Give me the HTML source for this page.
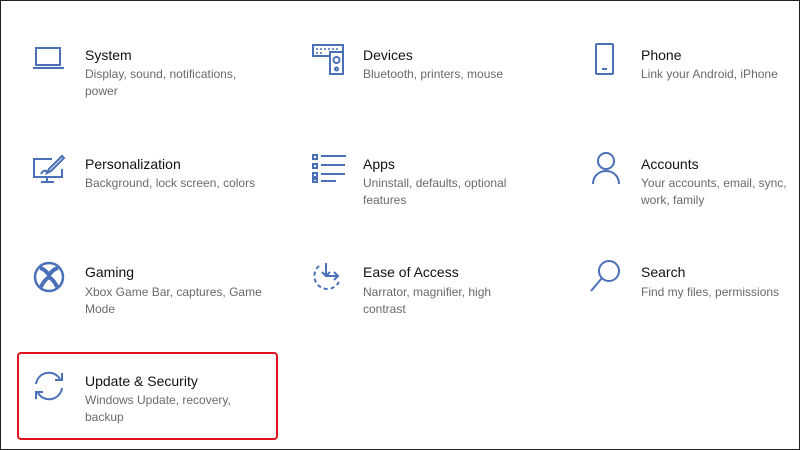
<!DOCTYPE html>
<html><head><style>
body{margin:0;width:800px;height:450px;overflow:hidden;background:#fff;font-family:"Liberation Sans",sans-serif;}
.frame{position:absolute;left:0;top:0;width:798px;height:448px;border:1px solid #222;}
.t{position:absolute;font-size:14px;color:#111;white-space:nowrap}
.d{position:absolute;font-size:12px;color:#6a6a6a;line-height:17px;width:178px}
.c2{width:150px}.c3{width:150px}
svg{position:absolute}
.sel{position:absolute;left:17px;top:352px;width:257px;height:84px;border:2.5px solid #e0141c;border-radius:4px}
</style></head><body>
<div class="frame"></div>
<svg style="left:32px;top:44px" width="34" height="28" viewBox="0 0 34 28" fill="none" stroke="#4a70b8" stroke-width="2"><rect x="4" y="4" width="24" height="17"/><path d="M1 24h31"/></svg>
<div class="t" style="left:85px;top:47px">System</div>
<div class="d" style="left:85px;top:66px">Display, sound, notifications, power</div>
<svg style="left:310px;top:42px" width="36" height="34" viewBox="0 0 36 34" fill="none" stroke="#4a70b8" stroke-width="2"><path d="M20 14H3V3h30v7"/><rect x="20" y="10" width="13" height="22"/><circle cx="26.5" cy="18" r="3"/><circle cx="26.5" cy="27" r="1.5"/><path d="M6 7h2M10 7h2M14 7h2M18 7h2M22 7h2M26 7h2M6 11h2M10 11h2" stroke-width="1.5"/></svg>
<div class="t" style="left:363px;top:47px">Devices</div>
<div class="d c2" style="left:363px;top:66px">Bluetooth, printers, mouse</div>
<svg style="left:592px;top:42px" width="26" height="34" viewBox="0 0 26 34" fill="none" stroke="#4a70b8" stroke-width="2"><rect x="4" y="2" width="17" height="30" rx="1"/><path d="M10 27h5"/></svg>
<div class="t" style="left:641px;top:47px">Phone</div>
<div class="d c3" style="left:641px;top:66px">Link your Android, iPhone</div>
<svg style="left:32px;top:154px" width="34" height="32" viewBox="0 0 34 32" fill="none" stroke="#4a70b8" stroke-width="2"><path d="M20 5H2v18h28V15"/><path d="M15 23v5M9 28h13"/><path d="M30 2L17 15l-2 4 4-2L32 4z"/><path d="M9 20c2-4 5-4 6-2"/></svg>
<div class="t" style="left:85px;top:156px">Personalization</div>
<div class="d" style="left:85px;top:175px;width:200px">Background, lock screen, colors</div>
<svg style="left:310px;top:152px" width="36" height="34" viewBox="0 0 36 34" fill="none" stroke="#4a70b8" stroke-width="2"><rect x="3" y="3" width="4" height="4"/><rect x="3" y="12" width="4" height="4"/><rect x="3" y="21" width="4" height="4"/><rect x="3" y="27" width="4" height="3"/><path d="M11 4h32M11 13h24M11 22h24M11 29h15"/></svg>
<div class="t" style="left:363px;top:156px">Apps</div>
<div class="d c2" style="left:363px;top:175px">Uninstall, defaults, optional features</div>
<svg style="left:590px;top:150px" width="32" height="36" viewBox="0 0 32 36" fill="none" stroke="#4a70b8" stroke-width="2"><circle cx="16" cy="11" r="8"/><path d="M3 34c0-8 6-13 13-13s13 5 13 13"/></svg>
<div class="t" style="left:641px;top:156px">Accounts</div>
<div class="d c3" style="left:641px;top:175px">Your accounts, email, sync, work, family</div>
<svg style="left:32px;top:260px" width="34" height="34" viewBox="0 0 34 34"><circle cx="17" cy="17" r="14" fill="none" stroke="#4a70b8" stroke-width="2.5"/><path d="M8 8c4 1 7 4 9 7 2-3 5-6 9-7M9 27c2-5 5-8 8-10 3 2 6 5 8 10" fill="none" stroke="#4a70b8" stroke-width="4"/></svg>
<div class="t" style="left:85px;top:264px">Gaming</div>
<div class="d" style="left:85px;top:284px">Xbox Game Bar, captures, Game Mode</div>
<svg style="left:310px;top:260px" width="36" height="34" viewBox="0 0 36 34" fill="none" stroke="#4a70b8" stroke-width="2"><path d="M9 6a13 13 0 1 0 21 13" stroke-dasharray="4 3"/><path d="M16 3v13h12M12 12l4 4 4-4M24 12l4 4-4 4"/></svg>
<div class="t" style="left:363px;top:264px">Ease of Access</div>
<div class="d c2" style="left:363px;top:284px">Narrator, magnifier, high contrast</div>
<svg style="left:588px;top:258px" width="36" height="36" viewBox="0 0 36 36" fill="none" stroke="#4a70b8" stroke-width="2"><circle cx="21" cy="13" r="10"/><path d="M14 20L3 33"/></svg>
<div class="t" style="left:641px;top:264px">Search</div>
<div class="d c3" style="left:641px;top:284px">Find my files, permissions</div>
<div class="sel"></div>
<svg style="left:32px;top:370px" width="34" height="32" viewBox="0 0 34 32" fill="none" stroke="#4a70b8" stroke-width="2"><path d="M4 14A13 13 0 0 1 28 9"/><path d="M30 18A13 13 0 0 1 6 23"/><path d="M30 3v7h-7M4 29v-7h7"/></svg>
<div class="t" style="left:85px;top:373px">Update &amp; Security</div>
<div class="d" style="left:85px;top:392px;width:160px">Windows Update, recovery, backup</div>
</body></html>
